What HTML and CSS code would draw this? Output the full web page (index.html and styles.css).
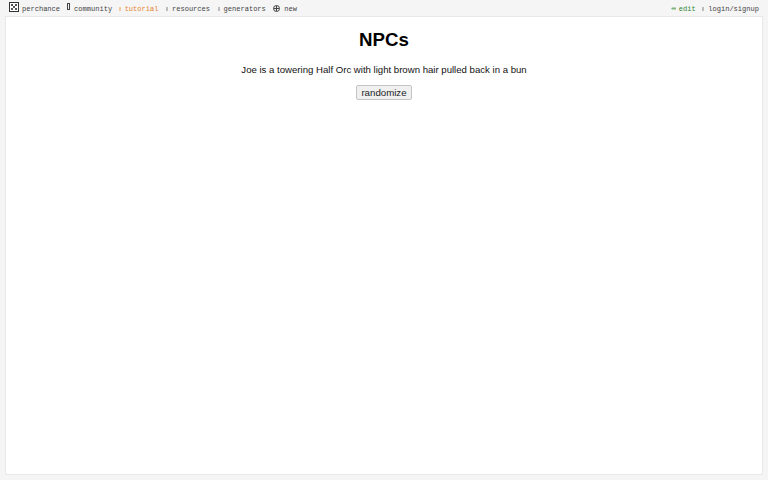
FILE: index.html
```html
<!DOCTYPE html>
<html lang="en">
<head>
<meta charset="utf-8">
<title>NPCs</title>
<link rel="stylesheet" href="styles.css">
</head>
<body>
<nav class="topbar">
  <div class="nav-group">
    <a class="nav-item brand">
      <svg class="dice" width="10" height="10" viewBox="0 0 10 10"><rect x=".5" y=".5" width="9" height="9" fill="#fff" stroke="#333"/><rect x="2" y="2" width="2" height="2" fill="#555"/><rect x="6" y="2" width="2" height="2" fill="#555"/><rect x="4" y="4" width="2" height="2" fill="#555"/><rect x="2" y="6" width="2" height="2" fill="#555"/><rect x="6" y="6" width="2" height="2" fill="#555"/></svg>
      <span>perchance</span>
    </a>
    <a class="nav-item community"><i class="tofu tall"></i><span>community</span></a>
    <a class="nav-item tutorial"><i class="tofu"></i><span>tutorial</span></a>
    <a class="nav-item"><i class="tofu"></i><span>resources</span></a>
    <a class="nav-item"><i class="tofu"></i><span>generators</span></a>
    <a class="nav-item new">
      <svg width="7" height="7" viewBox="0 0 7 7"><circle cx="3.5" cy="3.5" r="3" fill="none" stroke="#444"/><path d="M3.5 1v5M1 3.5h5" stroke="#444"/></svg>
      <span>new</span>
    </a>
  </div>
  <div class="nav-group">
    <a class="nav-item edit">
      <svg class="pencil" width="5" height="3" viewBox="0 0 5 3"><path d="M0 1.5L1 .5h4v2H1z" fill="#7fb87f"/></svg>
      <span>edit</span>
    </a>
    <a class="nav-item"><i class="tofu"></i><span>login/signup</span></a>
  </div>
</nav>
<main class="panel">
  <h1 class="title">NPCs</h1>
  <p class="output">Joe is a towering Half Orc with light brown hair pulled back in a bun</p>
  <button class="randomize" type="button">randomize</button>
</main>
</body>
</html>
```
FILE: styles.css
```css
html, body { height: 100%; }
body {
  margin: 0;
  background: #f5f5f5;
  display: flex;
  flex-direction: column;
  overflow: hidden;
  font-family: "Liberation Sans", Arial, sans-serif;
}
.topbar {
  height: 16px;
  flex: none;
  display: flex;
  justify-content: space-between;
  align-items: center;
  padding: 0 9px 0 9px;
  font: 7.05px/16px "Liberation Mono", monospace;
  color: #444;
}
.nav-group { display: flex; align-items: center; }
.nav-item { display: flex; align-items: center; margin-right: 7.5px; height: 16px; padding-top: 1px; box-sizing: border-box; }
.nav-group:last-child .nav-item:last-child { margin-right: 0; }
.brand { gap: 3px; margin-right: 7px; }
.brand .dice { margin-top: -4px; }
.community { margin-right: 6.5px; }
.tofu { display: block; width: 2px; height: 4px; border: 1px solid #bbb; border-width: 0 1px; box-sizing: border-box; margin-right: 4px; }
.tofu.tall { width: 3px; height: 7px; border: 1px solid #444; margin-top: -4px; }
.tutorial { color: #e8832e; }
.tutorial .tofu { border-color: #f5c9a0; }
.new svg { margin-right: 4px; }
.edit { color: #2e852e; margin-right: 6.5px; }
.pencil { margin-right: 3px; }
.panel {
  flex: 1;
  margin: 0 5px 5px;
  background: #fff;
  border: 1px solid #e8e8e8;
  display: flex;
  flex-direction: column;
  align-items: center;
  color: #000;
}
.title { margin: 12px 0 0; font-size: 18.7px; line-height: 21px; font-weight: bold; }
.output { margin: 14px 0 0; font-size: 9.6px; line-height: 12px; color: #111; }
.randomize {
  margin-top: 9px;
  width: 56px;
  height: 15px;
  padding: 0;
  font: 9.7px "Liberation Sans", Arial, sans-serif;
  color: #222;
  background: #f0f0f0;
  border: 1px solid #c4c4c4;
  border-radius: 2px;
}
```
